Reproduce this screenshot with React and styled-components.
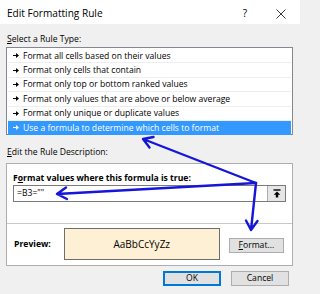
import styled, { createGlobalStyle } from "styled-components";

const GlobalStyle = createGlobalStyle`
  html, body {
    margin: 0;
    padding: 0;
    background: #f0f0f0;
  }
`;

const Dialog = styled.div`
  position: relative;
  width: 300px;
  height: 294px;
  background: #f0f0f0;
  font-family: "Open Sans", "Noto Sans", sans-serif;
  font-size: 8.6px;
  color: #000;
  overflow: hidden;
`;

const TitleBar = styled.div`
  height: 24px;
  background: #fff;
  display: flex;
  align-items: center;
  padding-left: 7px;
`;

const Title = styled.div`
  flex: 1;
  font-size: 10.1px;
  padding-top: 2px;
`;

const Help = styled.div`
  width: 10px;
  font-size: 10px;
  text-align: center;
  margin-right: 26px;
  padding-top: 2px;
`;

const Close = styled.svg`
  width: 10px;
  height: 10px;
  margin-right: 14px;
  margin-top: 3px;
`;

const Body = styled.div`
  padding: 0 7px 0 6px;
  display: flex;
  flex-direction: column;
`;

const Label = styled.div`
  height: 12px;
  line-height: 12px;
  padding-left: 1px;
  margin-top: ${(p) => p.$top}px;
  margin-bottom: ${(p) => p.$bottom}px;
`;

const Key = styled.span`
  text-decoration: underline;
  text-underline-offset: 1px;
`;

const List = styled.div`
  height: 88px;
  box-sizing: border-box;
  border: 1px solid #828790;
  background: #fff;
  padding: 1px;
`;

const Row = styled.div`
  height: 14.4px;
  box-sizing: border-box;
  display: flex;
  align-items: center;
  gap: 4px;
  padding-left: 5px;
  border-bottom: 1px solid ${(p) => (p.$selected ? "#3399ff" : "#eeeeee")};
  background: ${(p) => (p.$selected ? "#3399ff" : "#fff")};
  color: ${(p) => (p.$selected ? "#fff" : "#000")};
  white-space: nowrap;
`;

const Bullet = styled.svg`
  width: 6px;
  height: 5px;
  flex: none;
`;

const Panel = styled.div`
  height: 103px;
  box-sizing: border-box;
  border: 1px solid #adadad;
  background: #fff;
  display: flex;
  flex-direction: column;
`;

const FormulaPart = styled.div`
  height: 51px;
  padding: 8px 6px 0 6px;
  display: flex;
  flex-direction: column;
  gap: 1px;
`;

const Bold = styled.div`
  font-weight: 700;
  height: 12px;
  line-height: 12px;
`;

const InputRow = styled.div`
  display: flex;
  height: 17px;
  width: 273px;
  box-sizing: border-box;
  border: 1px solid #7a7a7a;
  background: #fff;
`;

const InputText = styled.div`
  flex: 1;
  padding-left: 3px;
  line-height: 15px;
`;

const RefButton = styled.div`
  width: 17px;
  display: flex;
  align-items: center;
  justify-content: center;
  background: #e6e6e6;
  border-left: 1px solid #adadad;
`;

const PreviewPart = styled.div`
  flex: 1;
  border-top: 1px solid #c8c8c8;
  display: flex;
  align-items: center;
  padding: 0 8px 2px 7px;
  gap: 7px;
`;

const Swatch = styled.div`
  width: 161px;
  height: 32px;
  box-sizing: border-box;
  border: 1px solid #6e6e6e;
  background: #fdf0d4;
  display: flex;
  align-items: center;
  justify-content: center;
  font-size: 10px;
  margin-left: 6px;
`;

const Button = styled.div`
  width: ${(p) => p.$w}px;
  height: 15px;
  box-sizing: border-box;
  background: #e1e1e1;
  border: ${(p) => (p.$primary ? "2px solid #0078d7" : "1px solid #adadad")};
  display: flex;
  align-items: center;
  justify-content: center;
  line-height: 1;
`;

const FormatButton = styled(Button)`
  margin-left: 2px;
  margin-top: 3px;
`;

const Footer = styled.div`
  display: flex;
  justify-content: flex-end;
  gap: 10px;
  padding-right: 4px;
  margin-top: 5px;
`;

const Overlay = styled.svg`
  position: absolute;
  left: 0;
  top: 0;
  width: 300px;
  height: 294px;
  pointer-events: none;
`;

const rules = [
  "Format all cells based on their values",
  "Format only cells that contain",
  "Format only top or bottom ranked values",
  "Format only values that are above or below average",
  "Format only unique or duplicate values",
  "Use a formula to determine which cells to format",
];

export default function App() {
  return (
    <Dialog>
      <GlobalStyle />
      <TitleBar>
        <Title>Edit Formatting Rule</Title>
        <Help>?</Help>
        <Close viewBox="0 0 10 10">
          <path d="M0.5 0.5 L9.5 9.5 M9.5 0.5 L0.5 9.5" stroke="#222" strokeWidth="0.9" />
        </Close>
      </TitleBar>
      <Body>
        <Label $top={9} $bottom={2}>
          <Key>S</Key>elect a Rule Type:
        </Label>
        <List>
          {rules.map((r, i) => {
            const selected = i === rules.length - 1;
            return (
              <Row key={i} $selected={selected}>
                <Bullet viewBox="0 0 6 5">
                  <path d="M0 2 H3 V0 L6 2.5 L3 5 V3 H0 Z" fill={selected ? "#fff" : "#000"} />
                </Bullet>
                {r}
              </Row>
            );
          })}
        </List>
        <Label $top={11} $bottom={5}>
          <Key>E</Key>dit the Rule Description:
        </Label>
        <Panel>
          <FormulaPart>
            <Bold>
              F<Key>o</Key>rmat values where this formula is true:
            </Bold>
            <InputRow>
              <InputText>=B3=""</InputText>
              <RefButton>
                <svg width="8" height="9" viewBox="0 0 8 9">
                  <path d="M0.5 1 H7.5" stroke="#000" strokeWidth="1.4" />
                  <path d="M4 2.5 L7.3 5.8 H5.2 V8.5 H2.8 V5.8 H0.7 Z" fill="#000" />
                </svg>
              </RefButton>
            </InputRow>
          </FormulaPart>
          <PreviewPart>
            <Bold>Preview:</Bold>
            <Swatch>AaBbCcYyZz</Swatch>
            <FormatButton $w={57}>
              <span>
                <Key>F</Key>ormat...
              </span>
            </FormatButton>
          </PreviewPart>
        </Panel>
        <Footer>
          <Button $w={58} $primary>
            OK
          </Button>
          <Button $w={58}>Cancel</Button>
        </Footer>
      </Body>
      <Overlay viewBox="0 0 300 294">
        <g stroke="#1616d9" strokeWidth="2.4" strokeLinecap="round" strokeLinejoin="round" fill="none">
          <path d="M256 183 L143 139 M149.5 147.5 L143 139 L153.5 137" />
          <path d="M256 183 L57 194 M67 199 L57 194 L66 187.5" />
          <path d="M256 183 L251 230 M257.5 221 L251 230 L246 220.5" />
        </g>
      </Overlay>
    </Dialog>
  );
}
